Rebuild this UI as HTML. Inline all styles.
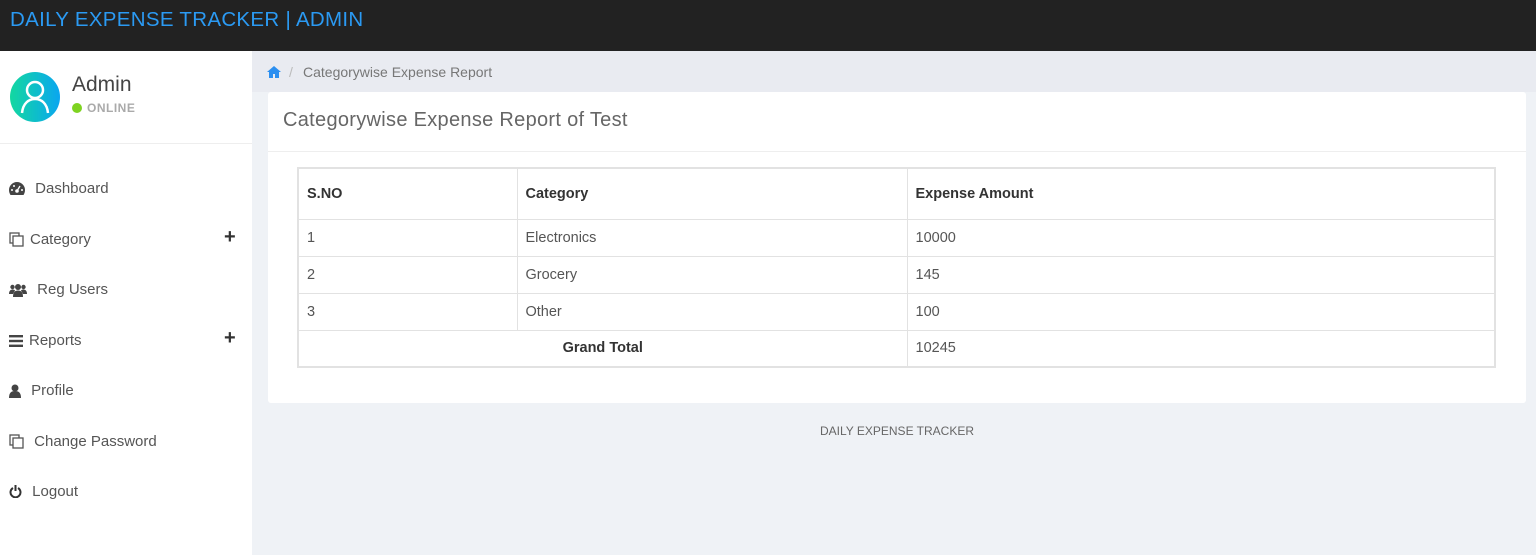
<!DOCTYPE html>
<html><head><meta charset="utf-8"><style>
*{box-sizing:border-box;margin:0;padding:0}
body{width:1536px;height:555px;overflow:hidden;font-family:"Liberation Sans",sans-serif;background:#eff2f6;position:relative;color:#555}
.top{position:absolute;left:0;top:0;width:1536px;height:51px;background:#222;}
.top span{position:absolute;left:10px;top:8px;color:#2b9af3;font-size:20.5px;letter-spacing:0.3px}
.side{position:absolute;left:0;top:51px;width:252px;height:504px;background:#fff}
.av{position:absolute;left:10px;top:21px;width:50px;height:50px;border-radius:50%;background:linear-gradient(90deg,#13d8a0,#0aa6f0)}
.name{position:absolute;left:72px;top:22px;font-size:21px;color:#444}
.on{position:absolute;left:72px;top:50px;font-size:12px;font-weight:bold;color:#aaa;letter-spacing:.5px}
.on i{display:inline-block;width:10px;height:10px;border-radius:50%;background:#7ed321;margin-right:5px;vertical-align:-1px}
.sep{position:absolute;left:0;top:92px;width:252px;height:1px;background:#eee}
.item{position:absolute;left:9px;font-size:15px;color:#555;display:flex;align-items:center;gap:6px}
.plus{position:absolute;left:224px;font-size:20px;font-weight:bold;color:#333}
.bc{position:absolute;left:252px;top:51px;width:1284px;height:41px;background:#e9ebf1;font-size:14px;color:#777}
.bc span{position:absolute;top:13px}
.card{position:absolute;left:268px;top:92px;width:1258px;height:311px;background:#fff;border-radius:3px}
.card h2{font-weight:normal;font-size:20px;color:#666;padding:17px 15px;height:60px;border-bottom:1px solid #eee;letter-spacing:.3px}
table{position:absolute;left:29px;top:75px;width:1199px;border-collapse:collapse;font-size:14.5px;color:#555;border:2px solid #e2e2e2}
td,th{border:1px solid #e2e2e2;padding:0 8px;text-align:left}
th{height:51px;color:#333}
td{height:37px}
.foot{position:absolute;left:252px;width:1290px;top:424px;text-align:center;font-size:12px;color:#666}
</style></head><body>
<div class="top"><span>DAILY EXPENSE TRACKER | ADMIN</span></div>
<div class="side">
<div class="av"><svg width="50" height="50" viewBox="0 0 50 50"><circle cx="25" cy="18" r="8" fill="none" stroke="#fff" stroke-width="2.5"/><path d="M12 41c1-10 7-14 13-14s12 4 13 14" fill="none" stroke="#fff" stroke-width="2.5"/></svg></div>
<div class="name">Admin</div>
<div class="on"><i></i>ONLINE</div>
<div class="sep"></div>
<div class="item" style="top:129px"><svg width="16" height="13" viewBox="0 0 16 13"><path d="M8 0a8 8 0 0 0-8 8c0 2 .6 3.5 1.5 5h13c.9-1.5 1.5-3 1.5-5a8 8 0 0 0-8-8z" fill="#444"/><circle cx="8" cy="9" r="1.8" fill="#fff"/><path d="M8 9l3-5" stroke="#fff" stroke-width="1.3"/><circle cx="3" cy="8" r="1" fill="#fff"/><circle cx="13" cy="8" r="1" fill="#fff"/><circle cx="5" cy="4" r="1" fill="#fff"/></svg>&nbsp;Dashboard</div>
<div class="item" style="top:180px"><svg width="15" height="15" viewBox="0 0 15 15"><rect x="1" y="1" width="9" height="10" fill="none" stroke="#555" stroke-width="1.3"/><rect x="4" y="4" width="10" height="10" fill="#fff" stroke="#555" stroke-width="1.3"/></svg>Category</div>
<div class="plus" style="top:175px">+</div>
<div class="item" style="top:230px"><svg width="18" height="14" viewBox="0 0 18 14"><circle cx="9" cy="4" r="3" fill="#444"/><circle cx="3.5" cy="4" r="2.2" fill="#444"/><circle cx="14.5" cy="4" r="2.2" fill="#444"/><path d="M4 14c0-5 2-6.5 5-6.5s5 1.5 5 6.5z" fill="#444"/><path d="M0 11c0-3 1.5-4.5 3.5-4.5s2.5 1 2.5 1L4 11z" fill="#444"/><path d="M18 11c0-3-1.5-4.5-3.5-4.5s-2.5 1-2.5 1L14 11z" fill="#444"/></svg>&nbsp;Reg Users</div>
<div class="item" style="top:281px"><svg width="14" height="12" viewBox="0 0 14 12"><rect y="0" width="14" height="2.4" fill="#444"/><rect y="4.8" width="14" height="2.4" fill="#444"/><rect y="9.6" width="14" height="2.4" fill="#444"/></svg>Reports</div>
<div class="plus" style="top:276px">+</div>
<div class="item" style="top:331px"><svg width="12" height="14" viewBox="0 0 12 14"><circle cx="6" cy="4" r="3.5" fill="#444"/><path d="M0 14c0-5 2-7 6-7s6 2 6 7z" fill="#444"/></svg>&nbsp;Profile</div>
<div class="item" style="top:382px"><svg width="15" height="15" viewBox="0 0 15 15"><rect x="1" y="1" width="9" height="10" fill="none" stroke="#555" stroke-width="1.3"/><rect x="4" y="4" width="10" height="10" fill="#fff" stroke="#555" stroke-width="1.3"/></svg>&nbsp;Change Password</div>
<div class="item" style="top:432px"><svg width="13" height="13" viewBox="0 0 13 13"><path d="M4 3a5 5 0 1 0 5 0" fill="none" stroke="#333" stroke-width="2"/><path d="M6.5 0v6" stroke="#333" stroke-width="2"/></svg>&nbsp;Logout</div>
</div>
<div class="bc"><span style="left:15px;top:14px"><svg width="14" height="12" viewBox="0 0 14 12"><path d="M7 0L0 6h2v6h4V8h2v4h4V6h2z" fill="#2b8ff0"/></svg></span><span style="left:37px;color:#bbb">/</span><span style="left:51px">Categorywise Expense Report</span></div>
<div class="card"><h2>Categorywise Expense Report of Test</h2>
<table>
<tr><th style="width:219px">S.NO</th><th style="width:390px">Category</th><th>Expense Amount</th></tr>
<tr><td>1</td><td>Electronics</td><td>10000</td></tr>
<tr><td>2</td><td>Grocery</td><td>145</td></tr>
<tr><td>3</td><td>Other</td><td>100</td></tr>
<tr><th colspan="2" style="text-align:center;height:37px">Grand Total</th><td>10245</td></tr>
</table></div>
<div class="foot">DAILY EXPENSE TRACKER</div>
</body></html>
